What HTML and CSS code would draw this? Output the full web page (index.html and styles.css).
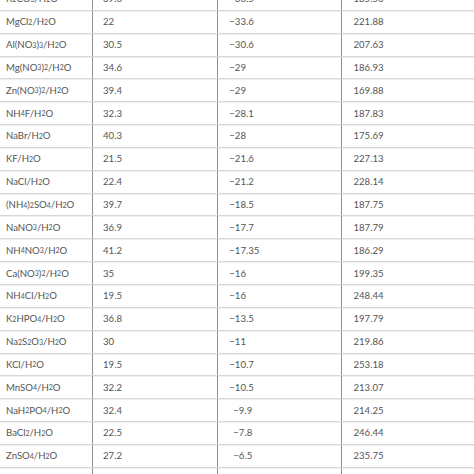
FILE: index.html
```html
<!DOCTYPE html>
<html>
<head>
<meta charset="utf-8">
<link rel="stylesheet" href="styles.css">
</head>
<body>
<div class="table">
  <div class="row"><div class="c c1">K<sub>2</sub>CO<sub>3</sub>/H<sub>2</sub>O</div><div class="c c2">39.6</div><div class="c c3">−36.5</div><div class="c c4">185.50</div></div>
  <div class="row"><div class="c c1">MgCl<sub>2</sub>/H<sub>2</sub>O</div><div class="c c2">22</div><div class="c c3">−33.6</div><div class="c c4">221.88</div></div>
  <div class="row"><div class="c c1">Al(NO<sub>3</sub>)<sub>3</sub>/H<sub>2</sub>O</div><div class="c c2">30.5</div><div class="c c3">−30.6</div><div class="c c4">207.63</div></div>
  <div class="row"><div class="c c1">Mg(NO<sub>3</sub>)<sub>2</sub>/H<sub>2</sub>O</div><div class="c c2">34.6</div><div class="c c3">−29</div><div class="c c4">186.93</div></div>
  <div class="row"><div class="c c1">Zn(NO<sub>3</sub>)<sub>2</sub>/H<sub>2</sub>O</div><div class="c c2">39.4</div><div class="c c3">−29</div><div class="c c4">169.88</div></div>
  <div class="row"><div class="c c1">NH<sub>4</sub>F/H<sub>2</sub>O</div><div class="c c2">32.3</div><div class="c c3">−28.1</div><div class="c c4">187.83</div></div>
  <div class="row"><div class="c c1">NaBr/H<sub>2</sub>O</div><div class="c c2">40.3</div><div class="c c3">−28</div><div class="c c4">175.69</div></div>
  <div class="row"><div class="c c1">KF/H<sub>2</sub>O</div><div class="c c2">21.5</div><div class="c c3">−21.6</div><div class="c c4">227.13</div></div>
  <div class="row"><div class="c c1">NaCl/H<sub>2</sub>O</div><div class="c c2">22.4</div><div class="c c3">−21.2</div><div class="c c4">228.14</div></div>
  <div class="row"><div class="c c1">(NH<sub>4</sub>)<sub>2</sub>SO<sub>4</sub>/H<sub>2</sub>O</div><div class="c c2">39.7</div><div class="c c3">−18.5</div><div class="c c4">187.75</div></div>
  <div class="row"><div class="c c1">NaNO<sub>3</sub>/H<sub>2</sub>O</div><div class="c c2">36.9</div><div class="c c3">−17.7</div><div class="c c4">187.79</div></div>
  <div class="row"><div class="c c1">NH<sub>4</sub>NO<sub>3</sub>/H<sub>2</sub>O</div><div class="c c2">41.2</div><div class="c c3">−17.35</div><div class="c c4">186.29</div></div>
  <div class="row"><div class="c c1">Ca(NO<sub>3</sub>)<sub>2</sub>/H<sub>2</sub>O</div><div class="c c2">35</div><div class="c c3">−16</div><div class="c c4">199.35</div></div>
  <div class="row"><div class="c c1">NH<sub>4</sub>Cl/H<sub>2</sub>O</div><div class="c c2">19.5</div><div class="c c3">−16</div><div class="c c4">248.44</div></div>
  <div class="row"><div class="c c1">K<sub>2</sub>HPO<sub>4</sub>/H<sub>2</sub>O</div><div class="c c2">36.8</div><div class="c c3">−13.5</div><div class="c c4">197.79</div></div>
  <div class="row"><div class="c c1">Na<sub>2</sub>S<sub>2</sub>O<sub>3</sub>/H<sub>2</sub>O</div><div class="c c2">30</div><div class="c c3">−11</div><div class="c c4">219.86</div></div>
  <div class="row"><div class="c c1">KCl/H<sub>2</sub>O</div><div class="c c2">19.5</div><div class="c c3">−10.7</div><div class="c c4">253.18</div></div>
  <div class="row"><div class="c c1">MnSO<sub>4</sub>/H<sub>2</sub>O</div><div class="c c2">32.2</div><div class="c c3">−10.5</div><div class="c c4">213.07</div></div>
  <div class="row"><div class="c c1">NaH<sub>2</sub>PO<sub>4</sub>/H<sub>2</sub>O</div><div class="c c2">32.4</div><div class="c c3 ind">−9.9</div><div class="c c4">214.25</div></div>
  <div class="row"><div class="c c1">BaCl<sub>2</sub>/H<sub>2</sub>O</div><div class="c c2">22.5</div><div class="c c3 ind">−7.8</div><div class="c c4">246.44</div></div>
  <div class="row"><div class="c c1">ZnSO<sub>4</sub>/H<sub>2</sub>O</div><div class="c c2">27.2</div><div class="c c3 ind">−6.5</div><div class="c c4">235.75</div></div>
  <div class="row"><div class="c c1"></div><div class="c c2"></div><div class="c c3"></div><div class="c c4"></div></div>
</div>
</body>
</html>
```
FILE: styles.css
```css
html, body {
  margin: 0;
  padding: 0;
  background: #ffffff;
  overflow: hidden;
}
body {
  width: 474px;
  height: 474px;
  font-family: Lato, "Liberation Sans", sans-serif;
  font-size: 9.6px;
  color: #555555;
}
.table {
  display: flex;
  flex-direction: column;
  margin-top: -12px;
}
.row {
  display: grid;
  grid-template-columns: 93px 125.3px 124.2px 1fr;
  height: 22.85px;
  box-sizing: border-box;
  border-bottom: 1px solid #d6d6d6;
  box-shadow: 0 1px 0 #efefef;
}
.c {
  display: flex;
  align-items: center;
  white-space: nowrap;
  box-sizing: border-box;
}
.c1 { padding-left: 6px; border-right: 1px solid #8f8f8f; }
.c2 { padding-left: 10px; border-right: 1px solid #8f8f8f; }
.c3 { padding-left: 11px; border-right: 1px solid #8f8f8f; }
.c4 { padding-left: 11px; }
.ind { padding-left: 15px; }
sub {
  font-size: 7px;
  vertical-align: -2.5px;
  line-height: 0;
}
```
